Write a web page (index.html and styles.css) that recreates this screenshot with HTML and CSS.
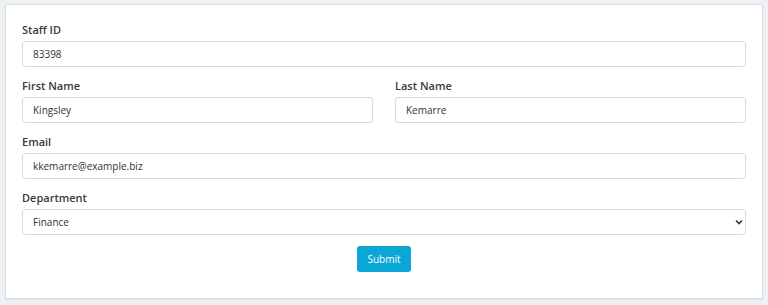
FILE: index.html
```
<!DOCTYPE html>
<html lang="en">
<head>
  <meta charset="UTF-8" />
  <meta name="viewport" content="width=device-width, initial-scale=1.0" />
  <title>Staff Form</title>
  <link rel="stylesheet" href="styles.css">
</head>
<body>
  <form class="card">
    <div class="form-group">
      <label for="staffId">Staff ID</label>
      <input type="text" id="staffId" value="83398" />
    </div>

    <div class="form-row">
      <div class="form-group">
        <label for="firstName">First Name</label>
        <input type="text" id="firstName" value="Kingsley" />
      </div>
      <div class="form-group">
        <label for="lastName">Last Name</label>
        <input type="text" id="lastName" value="Kemarre" />
      </div>
    </div>

    <div class="form-group">
      <label for="email">Email</label>
      <input type="email" id="email" value="kkemarre@example.biz" />
    </div>

    <div class="form-group">
      <label for="department">Department</label>
      <div class="select-wrap">
        <select id="department">
          <option>Finance</option>
          <option>Marketing</option>
          <option>Engineering</option>
        </select>
        <svg class="chevron" width="8" height="6" viewBox="0 0 8 6">
          <path d="M1 1.5 L4 4.5 L7 1.5" fill="none" stroke="#333" stroke-width="1.6" />
        </svg>
      </div>
    </div>

    <div class="actions">
      <button type="button">Submit</button>
    </div>
  </form>
</body>
</html>
```

FILE: styles.css
```
* {
  box-sizing: border-box;
}

body {
  margin: 0;
  padding: 4px 5px 6px;
  font-family: 'Open Sans', sans-serif;
  background: #eef1f3;
  color: #333;
}

.card {
  background: white;
  border: 1px solid #d9dee2;
  border-radius: 2px;
  box-shadow: 0 1px 2px rgba(0,0,0,0.06);
  padding: 16px 16px 16px;
}

.form-group {
  display: flex;
  flex-direction: column;
  margin-bottom: 10px;
  flex: 1;
}

.form-row {
  display: flex;
  gap: 22px;
}

label {
  font-size: 11px;
  font-weight: 600;
  line-height: 18px;
  margin-bottom: 2px;
  color: #3a3a3a;
}

input, select {
  height: 26px;
  padding: 0 10px;
  border: 1px solid #d3dcdf;
  border-radius: 3px;
  font-family: 'Open Sans', sans-serif;
  font-size: 10px;
  color: #333;
  background: white;
  outline: none;
  width: 100%;
}

.select-wrap {
  position: relative;
}

select {
  appearance: none;
  -webkit-appearance: none;
}

.chevron {
  position: absolute;
  right: 3px;
  top: 10px;
  pointer-events: none;
}

.actions {
  display: flex;
  justify-content: center;
  padding-top: 1px;
  margin-bottom: 10px;
}

button {
  height: 26px;
  padding: 0 10px;
  border: none;
  border-radius: 3px;
  background: #0aa6d6;
  color: white;
  font-family: 'Open Sans', sans-serif;
  font-size: 10px;
  cursor: pointer;
}
```
